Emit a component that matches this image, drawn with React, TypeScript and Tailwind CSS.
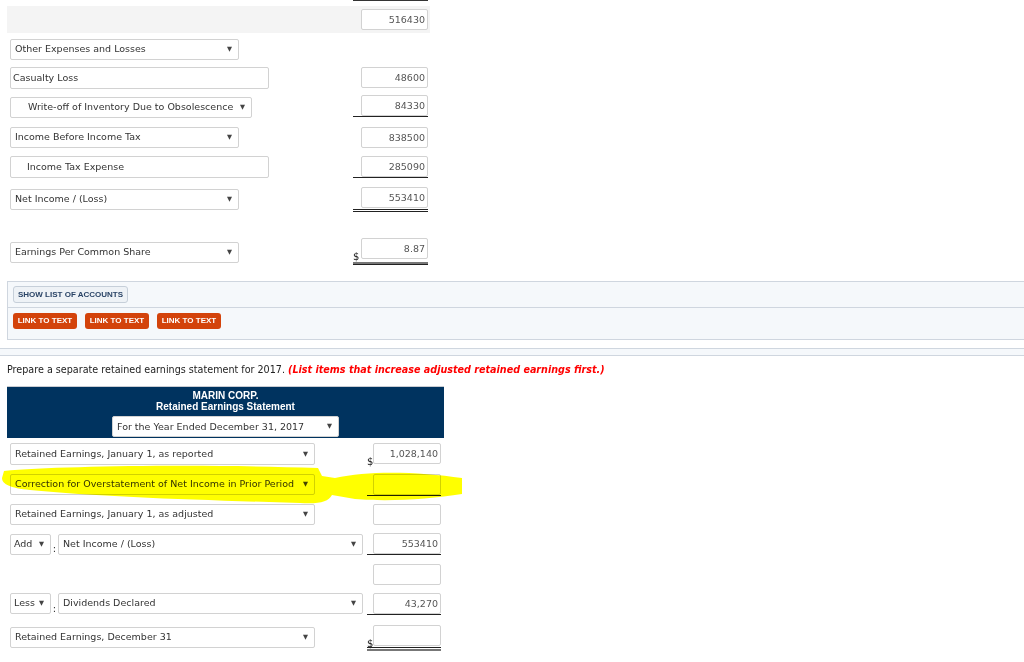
import React from "react";

function Arrow() {
  return <span className="text-[6.5px] leading-none text-[#444]">▼</span>;
}

function Sel({ text, cls, pl = "pl-[4px]" }: { text: string; cls: string; pl?: string }) {
  return (
    <div
      className={`flex items-center justify-between h-[21px] border border-[#d2d2d2] rounded-[2px] bg-white ${pl} pr-[6px] shrink-0 ${cls}`}
    >
      <span className="whitespace-nowrap">{text}</span>
      <Arrow />
    </div>
  );
}

function TextBox({ text, cls, pl = "pl-[2px]" }: { text: string; cls: string; pl?: string }) {
  return (
    <div className={`flex items-center h-[22px] border border-[#d2d2d2] rounded-[2px] bg-white ${pl} shrink-0 ${cls}`}>
      <span className="whitespace-nowrap">{text}</span>
    </div>
  );
}

function Box({ v = "", cls = "w-[67px]" }: { v?: string; cls?: string }) {
  return (
    <div
      className={`h-[21px] border border-[#d2d2d2] rounded-[2px] bg-white text-right pr-[2px] pt-[3px] text-[#555] ${cls}`}
    >
      {v}
    </div>
  );
}

/* top section value column: x=353..427 */
function TopVal({ v, line }: { v: string; line?: "single" | "double" }) {
  return (
    <div className="w-[75px] ml-auto flex flex-col shrink-0">
      <div className="ml-[8px]">
        <Box v={v} />
      </div>
      {line === "single" && <div className="h-[1px] bg-[#222]" />}
      {line === "double" && (
        <div className="flex flex-col">
          <div className="h-[1px] bg-[#222] mt-[1px]" />
          <div className="h-[1px] bg-[#222] mt-[1px]" />
        </div>
      )}
    </div>
  );
}

/* statement value column: x=367..440 */
function StVal({ v = "", line, dollar }: { v?: string; line?: "single" | "double"; dollar?: boolean }) {
  return (
    <div className="w-[74px] ml-auto flex flex-col shrink-0 relative">
      <div className="flex">
        <div className="w-[6px] flex items-end justify-start">
          {dollar && <span className="text-[10px] leading-none text-[#222] -mb-[3px]">$</span>}
        </div>
        <Box v={v} cls="w-[68px]" />
      </div>
      {line === "single" && <div className="h-[1px] bg-[#222]" />}
    </div>
  );
}

export default function App() {
  return (
    <div className="relative w-[1024px] h-[662px] overflow-hidden bg-white font-['DejaVu_Sans',sans-serif] text-[9.5px] text-[#333]">
      {/* top underline remnant */}
      <div className="ml-[353px] w-[75px] h-[1px] bg-[#333]" />

      {/* gray band */}
      <div className="ml-[7px] mt-[5px] w-[423px] h-[27px] bg-[#f4f4f4] flex items-center justify-end pr-[2px]">
        <Box v="516430" />
      </div>

      {/* Other Expenses */}
      <div className="ml-[10px] w-[418px] mt-[6px] flex">
        <Sel text="Other Expenses and Losses" cls="w-[229px]" />
      </div>

      {/* Casualty */}
      <div className="ml-[10px] w-[418px] mt-[7px] flex items-start">
        <TextBox text="Casualty Loss" cls="w-[259px]" />
        <TopVal v="48600" />
      </div>

      {/* Write-off */}
      <div className="ml-[10px] w-[418px] mt-[6px] flex items-start">
        <Sel text="Write-off of Inventory Due to Obsolescence" cls="w-[242px] mt-[2px]" pl="pl-[17px]" />
        <TopVal v="84330" line="single" />
      </div>

      {/* Income Before */}
      <div className="ml-[10px] w-[418px] mt-[9px] flex items-start">
        <Sel text="Income Before Income Tax" cls="w-[229px]" />
        <TopVal v="838500" />
      </div>

      {/* Income Tax Expense */}
      <div className="ml-[10px] w-[418px] mt-[8px] flex items-start">
        <TextBox text="Income Tax Expense" cls="w-[259px]" pl="pl-[16px]" />
        <TopVal v="285090" line="single" />
      </div>

      {/* Net income */}
      <div className="ml-[10px] w-[418px] mt-[9px] flex items-start">
        <Sel text="Net Income / (Loss)" cls="w-[229px] mt-[2px]" />
        <TopVal v="553410" line="double" />
      </div>

      {/* EPS */}
      <div className="ml-[10px] w-[418px] mt-[26px] flex items-start">
        <Sel text="Earnings Per Common Share" cls="w-[229px] mt-[4px]" />
        <div className="w-[75px] ml-auto flex flex-col shrink-0">
          <div className="flex">
            <div className="w-[8px] flex items-end">
              <span className="text-[10px] leading-none text-[#222] -mb-[3px]">$</span>
            </div>
            <Box v="8.87" />
          </div>
          <div className="h-[2px] bg-[#777] mt-[3px]" />
          <div className="h-[1px] bg-[#222]" />
        </div>
      </div>

      {/* panel */}
      <div className="ml-[7px] mt-[16px] w-[1030px] border border-[#cfd6df] bg-[#f5f8fb]">
        <div className="h-[25px] flex items-center pl-[5px]">
          <div className="h-[17px] px-[4px] flex items-center border border-[#c6cfd9] rounded-[3px] bg-[#eef2f6] font-['Liberation_Sans',sans-serif] font-bold text-[8px] text-[#2a4466]">
            SHOW LIST OF ACCOUNTS
          </div>
        </div>
        <div className="h-[32px] border-t border-[#cfd6df] flex items-start pt-[5px] pl-[5px] gap-[8px]">
          {[0, 1, 2].map((i) => (
            <div
              key={i}
              className="h-[16px] w-[64px] flex items-center justify-center rounded-[3px] bg-[#d3430b] font-['Liberation_Sans',sans-serif] font-bold text-[8px] text-white"
            >
              LINK TO TEXT
            </div>
          ))}
        </div>
      </div>

      {/* band 2 */}
      <div className="mt-[8px] w-[1024px] h-[8px] border-t border-b border-[#cfd6df] bg-[#f5f8fb]" />

      {/* instruction */}
      <div className="ml-[7px] mt-[7px] h-[14px] leading-[14px] text-[9.6px] text-[#222] whitespace-nowrap">
        Prepare a separate retained earnings statement for 2017.{" "}
        <span className="font-bold italic text-[#f00] text-[9.6px]">
          (List items that increase adjusted retained earnings first.)
        </span>
      </div>

      {/* header */}
      <div className="ml-[7px] mt-[9px] w-[437px] h-[52px] bg-[#00335f] border-t border-[#c9ccd2] flex flex-col items-center pt-[3px] font-['Liberation_Sans',sans-serif] font-bold text-[10px] text-white leading-[11px]">
        <div>MARIN CORP.</div>
        <div>Retained Earnings Statement</div>
        <div className="mt-[4px] font-['DejaVu_Sans',sans-serif] font-normal text-[#333] text-[9.5px]">
          <Sel text="For the Year Ended December 31, 2017" cls="w-[227px]" />
        </div>
      </div>

      {/* statement rows */}
      <div className="ml-[10px] w-[431px] mt-[5px] flex items-start">
        <Sel text="Retained Earnings, January 1, as reported" cls="w-[305px] h-[22px]" />
        <StVal v="1,028,140" dollar />
      </div>

      <div className="ml-[10px] w-[431px] mt-[9px] flex items-start">
        <Sel text="Correction for Overstatement of Net Income in Prior Period" cls="w-[305px]" />
        <StVal line="single" />
      </div>

      <div className="ml-[10px] w-[431px] mt-[8px] flex items-start">
        <Sel text="Retained Earnings, January 1, as adjusted" cls="w-[305px]" />
        <StVal />
      </div>

      <div className="ml-[10px] w-[431px] mt-[8px] flex items-start">
        <Sel text="Add" cls="w-[41px] mt-[1px]" pl="pl-[3px]" />
        <div className="w-[7px] h-[22px] flex items-end justify-center text-[10px] leading-none text-[#333] pb-[1px]">:</div>
        <Sel text="Net Income / (Loss)" cls="w-[305px] mt-[1px]" />
        <StVal v="553410" line="single" />
      </div>

      <div className="ml-[10px] w-[431px] mt-[9px] flex items-start">
        <StVal />
      </div>

      <div className="ml-[10px] w-[431px] mt-[8px] flex items-start">
        <Sel text="Less" cls="w-[41px]" pl="pl-[3px]" />
        <div className="w-[7px] h-[22px] flex items-end justify-center text-[10px] leading-none text-[#333] pb-[1px]">:</div>
        <Sel text="Dividends Declared" cls="w-[305px]" />
        <StVal v="43,270" line="single" />
      </div>

      <div className="ml-[10px] w-[431px] mt-[10px] flex items-start">
        <Sel text="Retained Earnings, December 31" cls="w-[305px] mt-[2px]" />
        <div className="w-[74px] ml-auto flex flex-col shrink-0">
          <div className="flex">
            <div className="w-[6px] flex items-end">
              <span className="text-[10px] leading-none text-[#222] -mb-[3px]">$</span>
            </div>
            <Box cls="w-[68px]" />
          </div>
          <div className="h-[1px] bg-[#222] mt-[1px]" />
          <div className="h-[2px] bg-[#777] mt-[1px]" />
        </div>
      </div>

      {/* yellow highlighter overlay */}
      <svg
        className="absolute left-0 top-0 pointer-events-none mix-blend-multiply"
        width="1024"
        height="662"
        viewBox="0 0 1024 662"
      >
        <path
          d="M 4 471 C 60 466, 200 464, 318 468 L 322 476 L 335 478 C 370 470, 420 472, 462 478 L 462 494 C 430 499, 390 502, 355 499 L 332 495 C 328 502, 320 504, 300 503 C 200 500, 100 497, 30 490 C 10 488, 2 484, 2 478 Z"
          fill="#ffff00"
        />
      </svg>
    </div>
  );
}
